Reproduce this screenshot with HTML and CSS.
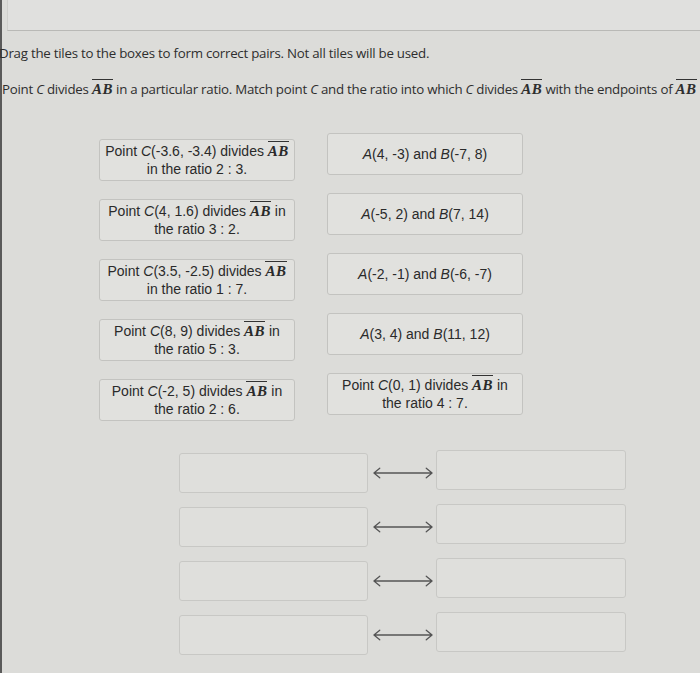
FILE: index.html
```html
<!DOCTYPE html>
<html lang="en">
<head>
    <meta charset="UTF-8">
    <meta name="viewport" content="width=device-width, initial-scale=1.0">
    <title>Matching tiles</title>
    <link rel="stylesheet" href="styles.css">
</head>
<body>
    <div class="frame">
        <div class="topbar"></div>

        <p class="prompt first">Drag the tiles to the boxes to form correct pairs. Not all tiles will be used.</p>
        <p class="prompt">Point <i>C</i> divides <span class="seg">AB</span> in a particular ratio. Match point <i>C</i> and the ratio into which <i>C</i> divides <span class="seg">AB</span> with the endpoints of <span class="seg">AB</span></p>

        <!-- tiles -->
        <div class="tiles">
            <div class="col col-left">
                <div class="tile"><span>Point <i>C</i>(-3.6, -3.4) divides <span class="seg">AB</span><br>in the ratio 2 : 3.</span></div>
                <div class="tile"><span>Point <i>C</i>(4, 1.6) divides <span class="seg">AB</span> in<br>the ratio 3 : 2.</span></div>
                <div class="tile"><span>Point <i>C</i>(3.5, -2.5) divides <span class="seg">AB</span><br>in the ratio 1 : 7.</span></div>
                <div class="tile"><span>Point <i>C</i>(8, 9) divides <span class="seg">AB</span> in<br>the ratio 5 : 3.</span></div>
                <div class="tile"><span>Point <i>C</i>(-2, 5) divides <span class="seg">AB</span> in<br>the ratio 2 : 6.</span></div>
            </div>
            <div class="col col-right">
                <div class="tile"><span><i>A</i>(4, -3) and <i>B</i>(-7, 8)</span></div>
                <div class="tile"><span><i>A</i>(-5, 2) and <i>B</i>(7, 14)</span></div>
                <div class="tile"><span><i>A</i>(-2, -1) and <i>B</i>(-6, -7)</span></div>
                <div class="tile"><span><i>A</i>(3, 4) and <i>B</i>(11, 12)</span></div>
                <div class="tile"><span>Point <i>C</i>(0, 1) divides <span class="seg">AB</span> in<br>the ratio 4 : 7.</span></div>
            </div>
        </div>

        <!-- drop targets -->
        <div class="pairs">
            <div class="pair">
                <div class="drop"></div>
                <svg class="arrow" viewBox="0 0 64 12" width="62" height="12"><path d="M2 6H62M8 1L2 6L8 11M56 1L62 6L56 11"/></svg>
                <div class="drop drop-right"></div>
            </div>
            <div class="pair">
                <div class="drop"></div>
                <svg class="arrow" viewBox="0 0 64 12" width="62" height="12"><path d="M2 6H62M8 1L2 6L8 11M56 1L62 6L56 11"/></svg>
                <div class="drop drop-right"></div>
            </div>
            <div class="pair">
                <div class="drop"></div>
                <svg class="arrow" viewBox="0 0 64 12" width="62" height="12"><path d="M2 6H62M8 1L2 6L8 11M56 1L62 6L56 11"/></svg>
                <div class="drop drop-right"></div>
            </div>
            <div class="pair">
                <div class="drop"></div>
                <svg class="arrow" viewBox="0 0 64 12" width="62" height="12"><path d="M2 6H62M8 1L2 6L8 11M56 1L62 6L56 11"/></svg>
                <div class="drop drop-right"></div>
            </div>
        </div>
    </div>
</body>
</html>
```

FILE: styles.css
```css
body {
    margin: 0;
    background-color: #dcdcd9;
    color: #2b2b2b;
    font-family: "Liberation Sans", Arial, sans-serif;
    overflow: hidden;
}

/* page frame, dark edge on the left */
.frame {
    border-left: 2px solid #5a5a5a;
    min-height: 673px;
    box-sizing: border-box;
}

.topbar {
    height: 30px;
    margin-left: 5px;
    background-color: #e0e0de;
    border-bottom: 1px solid #b9b9b6;
    border-left: 1px solid #cfcfcc;
}

.prompt {
    margin: 0;
    font-family: "Open Sans", sans-serif;
    font-size: 13.3px;
    letter-spacing: -0.25px;
    white-space: nowrap;
    color: #2e2e2e;
}

.prompt.first {
    margin-top: 13px;
    margin-left: -3px;
    margin-bottom: 18px;
}

/* segment name with a bar over it */
.seg {
    font-family: "Liberation Serif", serif;
    font-weight: bold;
    font-style: italic;
    font-size: 15px;
    letter-spacing: 0.5px;
    border-top: 1px solid #333;
    padding-top: 1px;
}

/* tiles */
.tiles {
    display: flex;
    gap: 32px;
    margin-top: 35px;
    margin-left: 97px;
}

.col {
    display: flex;
    flex-direction: column;
    gap: 18px;
    width: 196px;
}

.col-left {
    padding-top: 6px;
}

.tile {
    height: 42px;
    box-sizing: border-box;
    border: 1px solid #c3c3c0;
    border-radius: 3px;
    background-color: #e1e1de;
    display: flex;
    align-items: center;
    justify-content: center;
    text-align: center;
    font-size: 14px;
    line-height: 18px;
    color: #2a2a2a;
}

.tile .seg {
    font-size: 15px;
}

/* pair rows */
.pairs {
    display: flex;
    flex-direction: column;
    gap: 14px;
    margin-top: 32px;
    margin-left: 177px;
}

.pair {
    display: flex;
    align-items: center;
}

.drop {
    width: 189px;
    height: 40px;
    box-sizing: border-box;
    border: 1px solid #c8c8c5;
    border-radius: 3px;
    background-color: #dfdfdc;
}

.drop-right {
    width: 190px;
    margin-top: -6px;
}

.arrow {
    margin: 0 2px 0 4px;
}

.arrow path {
    fill: none;
    stroke: #555;
    stroke-width: 1.3;
    stroke-linecap: round;
    stroke-linejoin: round;
}
```
